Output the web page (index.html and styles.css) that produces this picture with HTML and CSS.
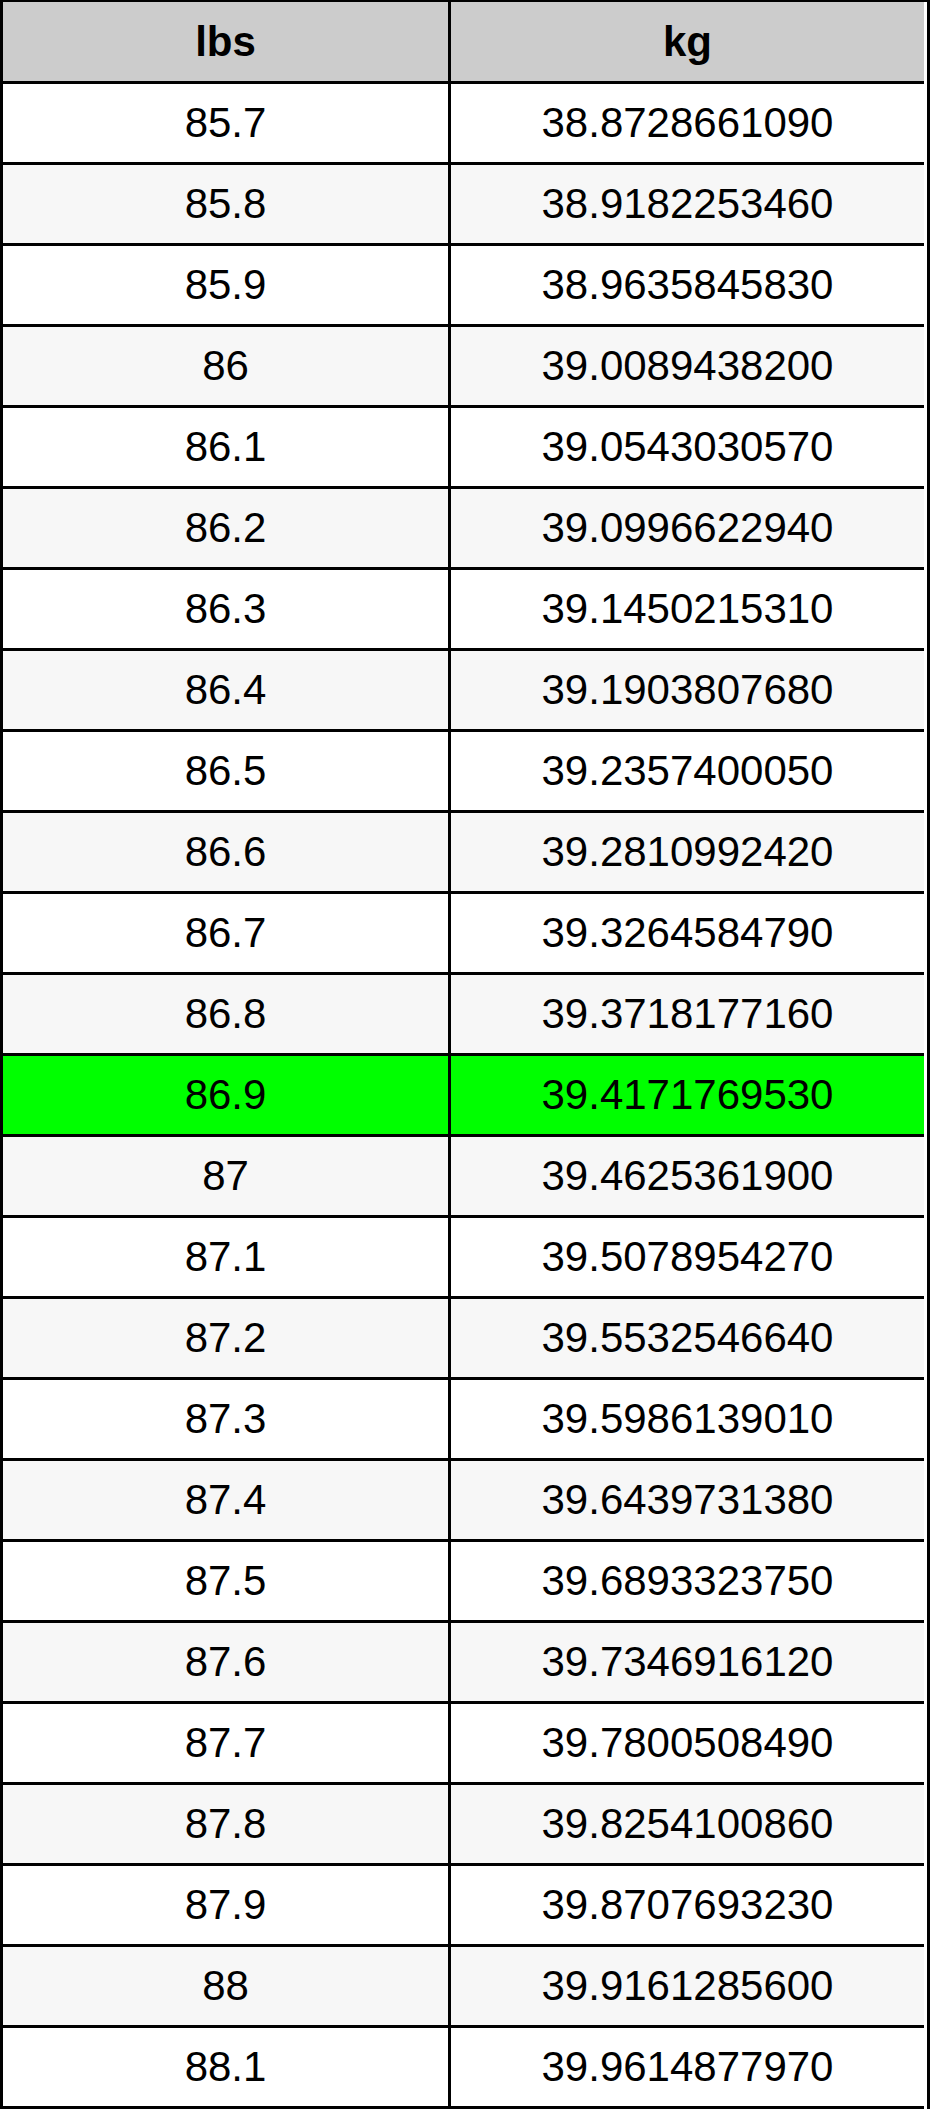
FILE: index.html
```html
<!DOCTYPE html>
<html>
<head>
<meta charset="utf-8">
<link rel="stylesheet" href="styles.css">
</head>
<body>
<div class="conv">
  <div class="cell head left">lbs</div><div class="cell head">kg</div>
  <div class="cell left">85.7</div><div class="cell">38.8728661090</div>
  <div class="cell alt left">85.8</div><div class="cell alt">38.9182253460</div>
  <div class="cell left">85.9</div><div class="cell">38.9635845830</div>
  <div class="cell alt left">86</div><div class="cell alt">39.0089438200</div>
  <div class="cell left">86.1</div><div class="cell">39.0543030570</div>
  <div class="cell alt left">86.2</div><div class="cell alt">39.0996622940</div>
  <div class="cell left">86.3</div><div class="cell">39.1450215310</div>
  <div class="cell alt left">86.4</div><div class="cell alt">39.1903807680</div>
  <div class="cell left">86.5</div><div class="cell">39.2357400050</div>
  <div class="cell alt left">86.6</div><div class="cell alt">39.2810992420</div>
  <div class="cell left">86.7</div><div class="cell">39.3264584790</div>
  <div class="cell alt left">86.8</div><div class="cell alt">39.3718177160</div>
  <div class="cell hl left">86.9</div><div class="cell hl">39.4171769530</div>
  <div class="cell alt left">87</div><div class="cell alt">39.4625361900</div>
  <div class="cell left">87.1</div><div class="cell">39.5078954270</div>
  <div class="cell alt left">87.2</div><div class="cell alt">39.5532546640</div>
  <div class="cell left">87.3</div><div class="cell">39.5986139010</div>
  <div class="cell alt left">87.4</div><div class="cell alt">39.6439731380</div>
  <div class="cell left">87.5</div><div class="cell">39.6893323750</div>
  <div class="cell alt left">87.6</div><div class="cell alt">39.7346916120</div>
  <div class="cell left">87.7</div><div class="cell">39.7800508490</div>
  <div class="cell alt left">87.8</div><div class="cell alt">39.8254100860</div>
  <div class="cell left">87.9</div><div class="cell">39.8707693230</div>
  <div class="cell alt left">88</div><div class="cell alt">39.9161285600</div>
  <div class="cell left">88.1</div><div class="cell">39.9614877970</div>
</div>
</body>
</html>
```
FILE: styles.css
```css
html, body {
  margin: 0;
  padding: 0;
  background: #ffffff;
}
.conv {
  width: 930px;
  box-sizing: border-box;
  display: grid;
  grid-template-columns: 448px 473px;
  border-left: 3px solid #000;
  border-right: 3px solid #000;
  border-top: 2px solid #000;
  font-family: "Liberation Sans", Arial, sans-serif;
  font-size: 42px;
  color: #000;
}
.cell {
  height: 78px;
  border-bottom: 3px solid #000;
  display: flex;
  align-items: center;
  justify-content: center;
  background: #ffffff;
}
.left {
  border-right: 3px solid #000;
}
.alt {
  background: #f7f7f7;
}
.hl {
  background: #00ff00;
}
.head {
  height: 79px;
  background: #cccccc;
  font-weight: bold;
}
```
